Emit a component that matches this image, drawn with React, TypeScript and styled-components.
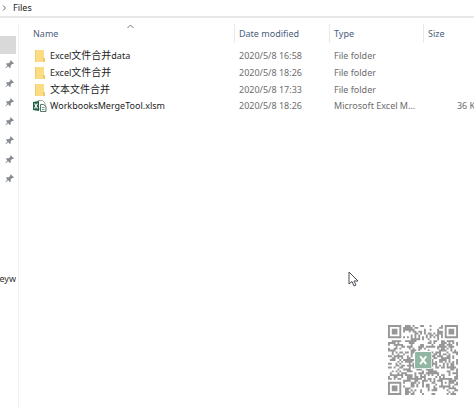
import React from "react";
import styled, { createGlobalStyle } from "styled-components";

const GlobalStyle = createGlobalStyle`
  * { box-sizing: border-box; }
  html, body, #root { height: 100%; margin: 0; }
  body {
    background: #fff;
    color: #1c1c1c;
    overflow: hidden;
    font: 9px/16px "Noto Sans", "Noto Sans CJK SC", sans-serif;
  }
`;

const Window = styled.div`
  position: relative;
  display: flex;
  flex-direction: column;
  height: 100%;
  overflow: hidden;
`;

const PathBar = styled.nav`
  display: flex;
  flex: none;
  align-items: center;
  gap: 6px;
  height: 18px;
  padding-left: 2px;
  border-bottom: 2px solid #e8e8e9;
`;

const Crumb = styled.a`
  color: #1c1c1c;
  text-decoration: none;
`;

const Body = styled.div`
  display: flex;
  flex: 1;
  min-height: 0;
  padding: 6px 0 4px;
`;

const Sidebar = styled.aside`
  display: flex;
  flex: none;
  flex-direction: column;
  width: 19px;
  overflow: hidden;
  border-right: 1px solid #f1f1f1;
`;

const Selected = styled.div`
  flex: none;
  height: 18px;
  margin: 12px 2px 0 0;
  background: #d9d9d9;
`;

const PinList = styled.ul`
  margin: 0;
  padding: 0;
  list-style: none;
`;

const PinItem = styled.li`
  display: flex;
  align-items: center;
  height: 19px;
  padding-left: 5px;
`;

const FolderLink = styled.a`
  display: flex;
  justify-content: flex-end;
  width: 16px;
  margin-top: 84px;
  overflow: hidden;
  color: #333;
  text-decoration: none;
`;

const Listing = styled.main`
  flex: 1;
  min-width: 0;
  padding-left: 10px;
  overflow: hidden;
`;

const FileTable = styled.table`
  width: 456px;
  table-layout: fixed;
  border-collapse: separate;
  border-spacing: 0;
`;

const Col = styled.col<{ $width: number }>`
  width: ${(p) => p.$width}px;
`;

const HeadCell = styled.th`
  position: relative;
  height: 19px;
  padding: 0 4px;
  border-right: 1px solid #e9e9e9;
  color: #4c607a;
  font-weight: 400;
  text-align: left;
`;

const SortMark = styled.svg`
  position: absolute;
  top: 0;
  left: 48%;
`;

const Rows = styled.tbody`
  &::before {
    content: "";
    display: block;
    height: 4px;
  }
`;

const Row = styled.tr`
  height: 17px;

  &:nth-child(even) {
    height: 16px;
  }
`;

const Cell = styled.td<{ $right?: boolean }>`
  padding: 0 4px;
  overflow: hidden;
  color: #6d6d6d;
  text-align: ${(p) => (p.$right ? "right" : "left")};
  text-overflow: ellipsis;
  white-space: nowrap;
`;

const FileName = styled.div`
  display: flex;
  align-items: center;
  gap: 3px;
  color: #1c1c1c;
`;

const Han = styled.span`
  font-size: 10px;
`;

const Pointer = styled.svg`
  position: absolute;
  top: 271px;
  left: 348px;
`;

const Code = styled.svg`
  position: absolute;
  right: 16px;
  bottom: 17px;
`;

const FolderIcon = () => (
  <svg width="14" height="14" viewBox="0 0 14 14" aria-hidden="true">
    <path d="M2 1h9v8h1v4H2z" fill="#fbdc83" />
    <path d="M2 1h1v12H2z" fill="#f0cb6c" />
    <path d="M10 9h2v4h-2z" fill="#eccb70" />
  </svg>
);

const ExcelIcon = () => (
  <svg width="14" height="14" viewBox="0 0 14 14" aria-hidden="true">
    <path d="M5 1.500h4.500L12 4v6H5z" fill="#fff" stroke="#9caaa2" />
    <path d="M0 3l6-1v10l-6-1z" fill="#216344" />
    <path d="M1.500 4.500l3 5M4.500 4.500l-3 5" stroke="#fff" strokeWidth="1.200" />
    <path d="M7.500 5.500h3l2.500 2v5H7.500z" fill="#f6faf8" stroke="#577668" />
    <path d="M9 8.500h2.500M9 10.500h2.500" stroke="#77a48c" />
  </svg>
);

const PinIcon = () => (
  <svg width="10" height="10" viewBox="0 0 10 10" aria-hidden="true">
    <path d="M5.500 1l3.500 3.500-1 .5-1 0-1.300 1.500v2L4.700 9 3.200 7.300.8 9.300l-.4-.4 2-2.500L1 5l.7-.8h2L5.200 3z" fill="#858b91" />
  </svg>
);

const SIZE = 37;

const finder = (x: number, y: number): boolean | null => {
  for (const [ox, oy] of [[0, 0], [SIZE - 7, 0], [0, SIZE - 7]]) {
    const dx = x - ox;
    const dy = y - oy;
    if (dx >= -1 && dx <= 7 && dy >= -1 && dy <= 7) {
      const ring = Math.max(Math.abs(dx - 3), Math.abs(dy - 3));
      return ring === 3 || ring <= 1;
    }
  }
  return null;
};

const buildModules = () => {
  let seed = 20200508;
  let path = "";
  for (let y = 0; y < SIZE; y++) {
    for (let x = 0; x < SIZE; x++) {
      seed = (Math.imul(seed, 1664525) + 1013904223) >>> 0;
      const align = Math.max(Math.abs(x - 30), Math.abs(y - 30));
      const mark = finder(x, y);
      let on = seed / 4294967296 < 0.5;
      if (x === 6 || y === 6) on = (x + y) % 2 === 0;
      if (align <= 2) on = align !== 1;
      if (mark !== null) on = mark;
      if (on) path += `M${x} ${y}h1v1h-1z`;
    }
  }
  return path;
};

const modules = buildModules();

const QrCode = () => (
  <Code width="70" height="70" viewBox="0 0 37 37" role="img" aria-label="QR code">
    <path d={modules} fill="#979797" />
    <rect x="13.800" y="13.800" width="9.400" height="9.400" rx="1" fill="#fff" />
    <rect x="14.300" y="14.300" width="8.600" height="8.600" rx=".5" fill="#91b7a2" />
    <path d="M17 16.500l3.200 4.200M20.200 16.500L17 20.700" stroke="#fff" strokeWidth="1" />
  </Code>
);

const files = [
  { name: "Excel文件合并data", date: "2020/5/8 16:58", type: "File folder", size: "" },
  { name: "Excel文件合并", date: "2020/5/8 18:26", type: "File folder", size: "" },
  { name: "文本文件合并", date: "2020/5/8 17:33", type: "File folder", size: "" },
  { name: "WorkbooksMergeTool.xlsm", date: "2020/5/8 18:26", type: "Microsoft Excel M...", size: "36 KB" },
];

const pins = [0, 1, 2, 3, 4, 5, 6];

const Label = ({ text }: { text: string }) => (
  <span>
    {text
      .split(/([\u4e00-\u9fff]+)/)
      .map((part, i) => (i % 2 ? <Han key={i}>{part}</Han> : part))}
  </span>
);

export default function App() {
  return (
    <Window>
      <GlobalStyle />
      <PathBar aria-label="Path">
        <svg width="5" height="8" viewBox="0 0 5 8" aria-hidden="true">
          <path d="M1 1.500L3.500 4 1 6.500" fill="none" stroke="#666" />
        </svg>
        <Crumb href="#files">Files</Crumb>
      </PathBar>
      <Body>
        <Sidebar>
          <Selected />
          <PinList>
            {pins.map((pin) => (
              <PinItem key={pin}>
                <PinIcon />
              </PinItem>
            ))}
          </PinList>
          <FolderLink href="#keyw">eyw</FolderLink>
        </Sidebar>
        <Listing>
          <FileTable>
            <colgroup>
              <Col $width={206} />
              <Col $width={95} />
              <Col $width={94} />
              <Col $width={61} />
            </colgroup>
            <thead>
              <tr>
                <HeadCell>
                  Name
                  <SortMark width="7" height="5" viewBox="0 0 7 5" aria-hidden="true">
                    <path d="M.5 4l3-3 3 3" fill="none" stroke="#777" />
                  </SortMark>
                </HeadCell>
                <HeadCell>Date modified</HeadCell>
                <HeadCell>Type</HeadCell>
                <HeadCell>Size</HeadCell>
              </tr>
            </thead>
            <Rows>
              {files.map((file) => (
                <Row key={file.name}>
                  <Cell>
                    <FileName>
                      {file.size ? <ExcelIcon /> : <FolderIcon />}
                      <Label text={file.name} />
                    </FileName>
                  </Cell>
                  <Cell>{file.date}</Cell>
                  <Cell>{file.type}</Cell>
                  <Cell $right>{file.size}</Cell>
                </Row>
              ))}
            </Rows>
          </FileTable>
        </Listing>
      </Body>
      <Pointer width="11" height="17" viewBox="0 0 11 17" aria-hidden="true">
        <path d="M1 1v12l3-2.500 2 4.500 2-1-2-4h4z" fill="#fff" stroke="#4b4b55" />
      </Pointer>
      <QrCode />
    </Window>
  );
}
